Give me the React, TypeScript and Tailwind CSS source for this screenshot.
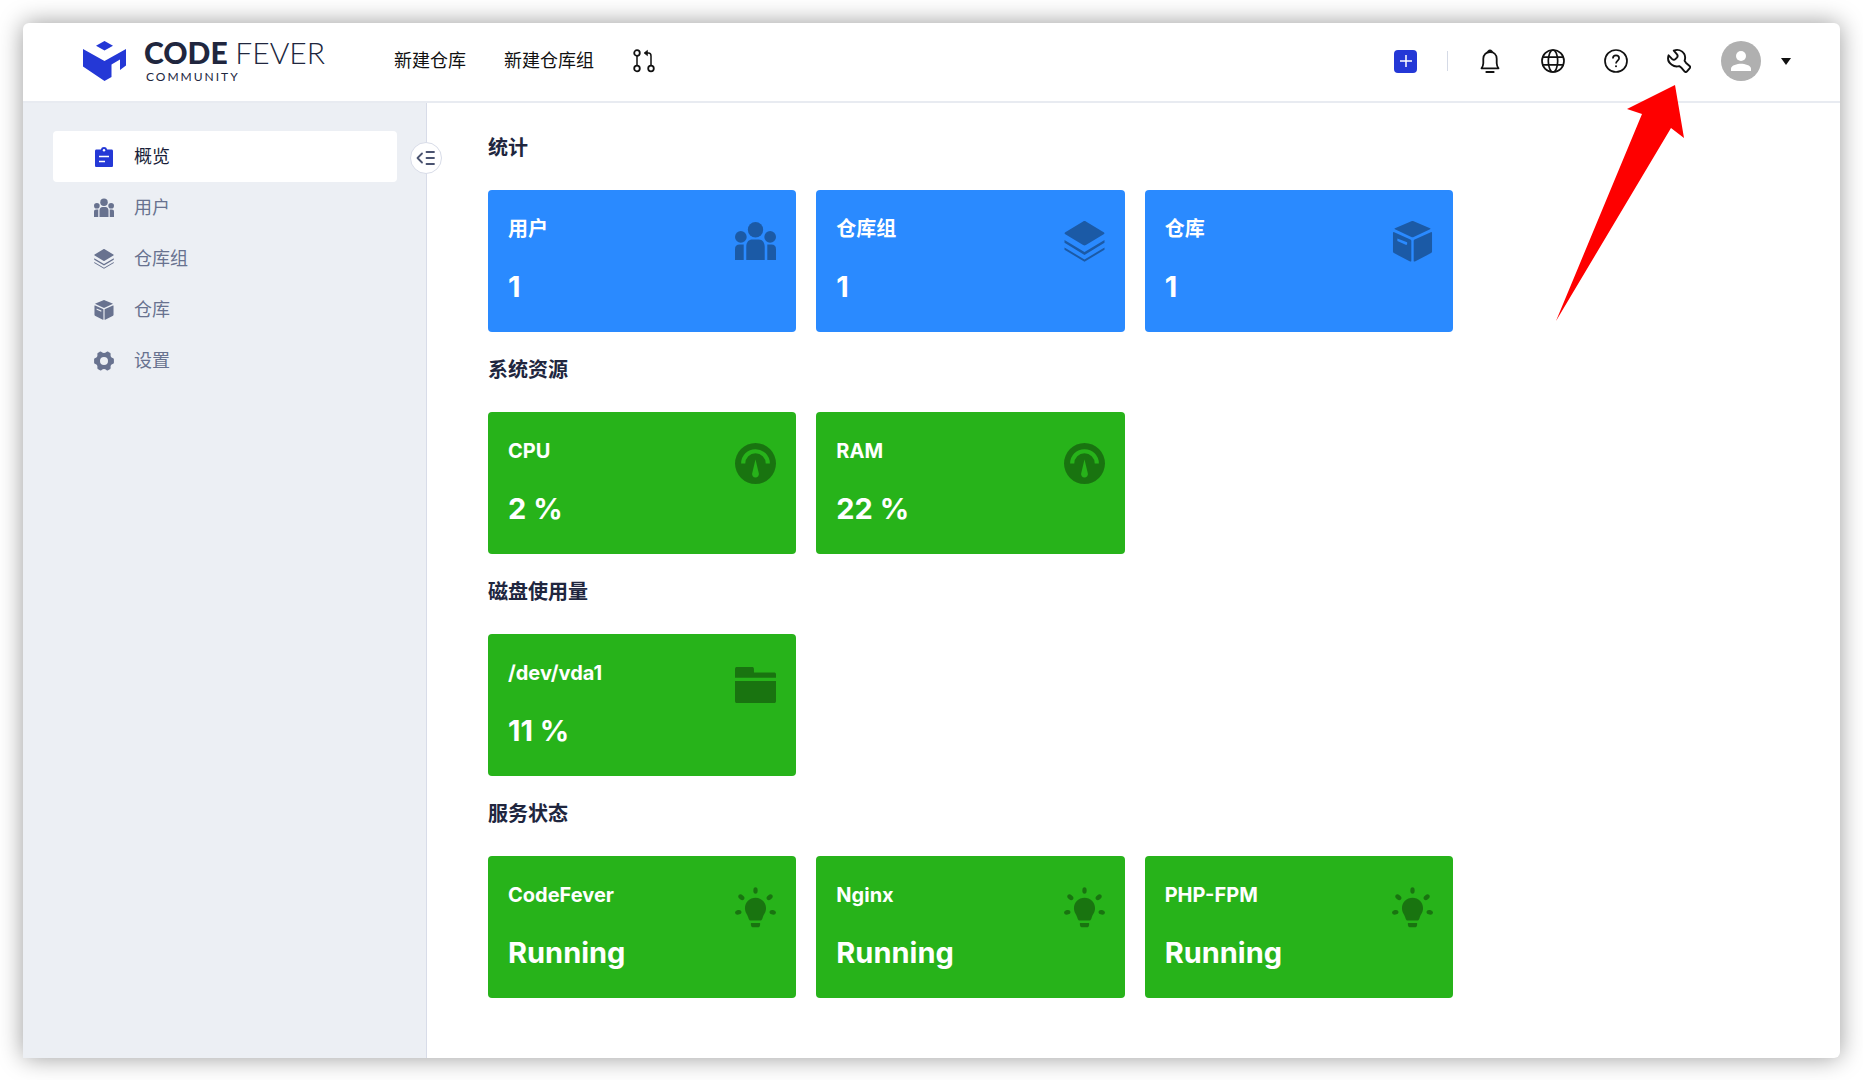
import type { ReactNode } from 'react';

interface IconProps {
  className?: string;
}

interface StatCard {
  label: string;
  value: string;
  icon: (props: IconProps) => ReactNode;
}

interface Section {
  title: string;
  color: string;
  cards: StatCard[];
}

function LogoMark({ className }: IconProps) {
  return (
    <svg viewBox="0 0 43 40" className={className} fill="#2438d6" aria-hidden="true">
      <path d="M21.500 0 30 4.800 21.500 9.600 13 4.800z" />
      <path d="M0 8 21.500 20 43 8v16.500l-6 4.500V18.500L28.500 23.500V36L21.500 40 0 25.500z" />
    </svg>
  );
}

function PullRequestIcon({ className }: IconProps) {
  return (
    <svg viewBox="0 0 24 24" className={className} fill="none" stroke="currentColor" strokeWidth="1.800" aria-hidden="true">
      <circle cx="5" cy="4" r="2.800" />
      <circle cx="5" cy="19.500" r="2.800" />
      <circle cx="19" cy="19.500" r="2.800" />
      <path d="M5 6.800v9.900M19 16.700V7c0-2-1-3-2.500-3H15" strokeWidth="1.500" />
      <path d="M12 4 15.500 1.300v5.400z" fill="currentColor" strokeWidth="0.600" />
    </svg>
  );
}

function BellIcon({ className }: IconProps) {
  return (
    <svg viewBox="0 0 24 24" className={className} fill="none" stroke="currentColor" strokeWidth="1.800" strokeLinejoin="round" strokeLinecap="round" aria-hidden="true">
      <path d="M3.500 19.300h17c-1.400-1.600-1.700-3-1.800-5v-4.500C18.700 5.700 15.800 3 12 3s-6.700 2.700-6.700 6.800v4.500c-.1 2-.4 3.400-1.800 5z" />
      <path d="M8.900 4C9 1.700 10.300.4 12 .4S15 1.700 15.100 4z" fill="currentColor" stroke="none" />
      <path d="M8.300 23h7.400" />
    </svg>
  );
}

function GlobeIcon({ className }: IconProps) {
  return (
    <svg viewBox="0 0 24 24" className={className} fill="none" stroke="currentColor" strokeWidth="1.700" aria-hidden="true">
      <circle cx="12" cy="12" r="11" />
      <ellipse cx="12" cy="12" rx="4.700" ry="11" />
      <path d="M1.800 8.200h20.400M1.800 15.800h20.400" />
    </svg>
  );
}

function HelpIcon({ className }: IconProps) {
  return (
    <svg viewBox="0 0 24 24" className={className} fill="none" stroke="currentColor" strokeWidth="1.700" aria-hidden="true">
      <circle cx="12" cy="12" r="11" />
      <path d="M8.900 9.400c0-1.900 1.300-3 3.100-3s3.100 1.100 3.100 2.800c0 2.300-3.100 2.500-3.100 5.300" />
      <circle cx="12" cy="17.300" r="1" fill="currentColor" stroke="none" />
    </svg>
  );
}

function WrenchIcon({ className }: IconProps) {
  return (
    <svg viewBox="0 0 24 24" className={className} fill="none" stroke="currentColor" strokeWidth="1.900" strokeLinejoin="round" aria-hidden="true">
      <path d="M6.800 1.600c4-1.500 8.300-.2 10.300 3.200 1.300 2.200 1.300 4.600.5 6.900l1.500 2.300 3.500 3c.8.700.8 1.500.2 2.200l-3 3.400c-.7.600-1.400.6-2.100 0l-3-3.500-2.500-2c-2.600.7-5.200.4-7.400-1.300C1.400 13.400.4 9.800 1.600 6.300l3.600 3.800c1 .9 2.300.9 3.200 0l1.500-1.500c.9-1 .9-2.200.1-3.200z" />
    </svg>
  );
}

function UserIcon({ className }: IconProps) {
  return (
    <svg viewBox="0 0 40 40" className={className} aria-hidden="true">
      <circle cx="20" cy="20" r="20" fill="#b0b0b0" />
      <circle cx="20" cy="15" r="5" fill="#fff" />
      <path d="M10 30v-2.500c0-3.300 6.500-4.800 10-4.800s10 1.500 10 4.800V30z" fill="#fff" />
    </svg>
  );
}

function ClipboardIcon({ className }: IconProps) {
  return (
    <svg viewBox="0 0 20 20" className={className} aria-hidden="true">
      <path fill="currentColor" d="M2.500 2.500h4.300a3.300 3.300 0 0 1 6.400 0h4.300c1 0 1.500.6 1.500 1.500v14.500c0 1-.5 1.500-1.500 1.500h-15C1.500 20 1 19.500 1 18.500V4c0-.9.500-1.500 1.500-1.500z" />
      <circle cx="10" cy="3.300" r="1.200" fill="#fff" />
      <path d="M5 9.500h10M5 14.500h6" stroke="#fff" strokeWidth="1.300" />
    </svg>
  );
}

function PeopleIcon({ className }: IconProps) {
  return (
    <svg viewBox="0 0 40 40" className={className} fill="currentColor" aria-hidden="true">
      <circle cx="20" cy="8.500" r="7.500" />
      <circle cx="5.700" cy="15.500" r="5.700" />
      <circle cx="34.300" cy="15.500" r="5.700" />
      <path d="M11 38V25c0-4.500 2.500-7 6-7h6c3.500 0 6 2.500 6 7v13zM0 38V27.500C0 24.500 1.500 23 4.500 23H8.500v15zM40 38V27.500c0-3-1.500-4.500-4.500-4.500H31.500v15z" />
    </svg>
  );
}

function LayersIcon({ className }: IconProps) {
  return (
    <svg viewBox="0 0 40 41" className={className} fill="currentColor" aria-hidden="true">
      <path d="M18.600.4c.9-.5 1.900-.5 2.800 0l17.800 10.800c1 .6 1 1.400 0 2L21.400 24c-.9.500-1.900.5-2.800 0L.8 13.200c-1-.6-1-1.400 0-2z" />
      <path d="M0 19 20 31 40 19v2.800L20 34 0 21.800zM0 26.500 20 38.500 40 26.500v2.300L20 40.700 0 28.800z" />
    </svg>
  );
}

function BoxIcon({ className }: IconProps) {
  return (
    <svg viewBox="0 0 40 42" className={className} fill="currentColor" aria-hidden="true">
      <path d="M18.800.3c.8-.4 1.600-.4 2.400 0L38 7.500c.6.300.6.700 0 1L21.200 16.300c-.8.400-1.600.4-2.400 0L2 8.500c-.6-.3-.6-.7 0-1z" />
      <path d="M21.200 20.500c0-.7.300-1.200 1-1.500L38.700 11.500c.8-.3 1.300 0 1.300.8v18.900c0 .8-.4 1.400-1 1.700L22.500 41.500c-.8.300-1.300 0-1.300-.8z" />
      <path fillRule="evenodd" d="M0 12.300c0-.8.500-1.100 1.300-.8L17.800 19c.7.300 1 .8 1 1.500v20.200c0 .8-.5 1.100-1.300.8L1 32.900c-.6-.3-1-.9-1-1.700zm4.500 5.500v2.600l8.500 4c1 .3 1.500-.2 1.500-1v-1.600z" />
    </svg>
  );
}

function GearIcon({ className }: IconProps) {
  return (
    <svg viewBox="0 0 20 20" className={className} fill="currentColor" aria-hidden="true">
      <path
        fillRule="evenodd"
        d="M5.500.9C6 .3 7 .3 7.600 1c1.500 1.400 3.300 1.400 4.800 0C13 .3 14 .3 14.500.9l1.800 1.200c.4.500.4 1 .3 1.600-.2 1.600.4 2.800 2 3.400.9.300 1.300.8 1.300 1.500v2.800c0 .7-.4 1.200-1.300 1.500-1.600.6-2.200 1.800-2 3.400.1.600.1 1.100-.3 1.600l-1.800 1.200c-.5.600-1.500.6-2.100-.1-1.500-1.400-3.300-1.400-4.800 0-.6.700-1.600.7-2.100.1l-1.800-1.200c-.4-.5-.4-1-.3-1.600.2-1.600-.4-2.800-2-3.400-.9-.3-1.300-.8-1.300-1.500V8.600c0-.7.400-1.200 1.300-1.500 1.600-.6 2.200-1.800 2-3.400-.1-.6-.1-1.100.3-1.600zM10 6a4 4 0 1 0 0 8 4 4 0 0 0 0-8z"
      />
    </svg>
  );
}

function GaugeIcon({ className }: IconProps) {
  return (
    <svg viewBox="0 0 40 40" className={className} fill="currentColor" aria-hidden="true">
      <path
        fillRule="evenodd"
        d="M20 0a20 20 0 1 0 0 40 20 20 0 0 0 0-40zM6 20a14 14 0 0 1 28 0h-4a10 10 0 0 0-20 0zM20 16l3.200 13.500a3.300 3.300 0 1 1-6.400 0z"
      />
    </svg>
  );
}

function FolderIcon({ className }: IconProps) {
  return (
    <svg viewBox="0 0 40 40" className={className} fill="currentColor" aria-hidden="true">
      <path d="M0 12.500V4c0-1.400.6-2 2-2h14.500c1.400 0 2 .6 2 2v3.300H38c1.400 0 2 .6 2 2v3.200zM0 15.500h40V35c0 1.400-.6 2-2 2H2c-1.400 0-2-.6-2-2z" />
    </svg>
  );
}

function BulbIcon({ className }: IconProps) {
  return (
    <svg viewBox="0 0 40 40" className={className} fill="currentColor" aria-hidden="true">
      <path d="M20 10.500c-5.800 0-10.300 4.500-10.300 10 0 4.500 2.300 6 3.300 9.500.5 1.700 1 2.800 2.500 2.800h9c1.500 0 2-1.100 2.500-2.800 1-3.500 3.300-5 3.300-9.500 0-5.500-4.500-10-10.300-10z" />
      <path d="M15.500 35h9v1.500c0 1.800-.9 2.800-2.500 2.800h-4c-1.600 0-2.500-1-2.500-2.800z" />
      <ellipse cx="20" cy="3.500" rx="2.100" ry="3.200" />
      <ellipse cx="6.200" cy="10" rx="2.300" ry="3.300" transform="rotate(-50 6.200 10)" />
      <ellipse cx="33.800" cy="10" rx="2.300" ry="3.300" transform="rotate(50 33.800 10)" />
      <ellipse cx="3.200" cy="24.700" rx="3.200" ry="2.200" transform="rotate(-12 3.200 24.700)" />
      <ellipse cx="36.800" cy="24.700" rx="3.200" ry="2.200" transform="rotate(12 36.800 24.700)" />
    </svg>
  );
}

function CollapseIcon({ className }: IconProps) {
  return (
    <svg viewBox="0 0 20 16" className={className} fill="none" stroke="currentColor" strokeWidth="1.800" strokeLinecap="round" strokeLinejoin="round" aria-hidden="true">
      <path d="M6 3.500 1.500 8 6 12.500M10.500 2H18M10.500 8H18M10.500 14H18" />
    </svg>
  );
}

const NAV_ITEMS = [
  { label: '概览', icon: ClipboardIcon, active: true },
  { label: '用户', icon: PeopleIcon, active: false },
  { label: '仓库组', icon: LayersIcon, active: false },
  { label: '仓库', icon: BoxIcon, active: false },
  { label: '设置', icon: GearIcon, active: false },
];

const TOOLS = [
  { label: '通知', icon: BellIcon },
  { label: '语言', icon: GlobeIcon },
  { label: '帮助', icon: HelpIcon },
  { label: '管理', icon: WrenchIcon },
];

const SECTIONS: Section[] = [
  {
    title: '统计',
    color: 'bg-[#2a8aff]',
    cards: [
      { label: '用户', value: '1', icon: PeopleIcon },
      { label: '仓库组', value: '1', icon: LayersIcon },
      { label: '仓库', value: '1', icon: BoxIcon },
    ],
  },
  {
    title: '系统资源',
    color: 'bg-[#27b31a]',
    cards: [
      { label: 'CPU', value: '2 %', icon: GaugeIcon },
      { label: 'RAM', value: '22 %', icon: GaugeIcon },
    ],
  },
  {
    title: '磁盘使用量',
    color: 'bg-[#27b31a]',
    cards: [{ label: '/dev/vda1', value: '11 %', icon: FolderIcon }],
  },
  {
    title: '服务状态',
    color: 'bg-[#27b31a]',
    cards: [
      { label: 'CodeFever', value: 'Running', icon: BulbIcon },
      { label: 'Nginx', value: 'Running', icon: BulbIcon },
      { label: 'PHP-FPM', value: 'Running', icon: BulbIcon },
    ],
  },
];

function Header() {
  return (
    <header className="flex h-20 shrink-0 items-center border-b-2 border-[#e8ebf1] pr-[49px] pb-0.5 pl-15 text-[#111]">
      <a href="#" className="flex items-center gap-[18px]">
        <LogoMark className="h-10 w-[43px]" />
        <span className="flex flex-col pb-1 font-[Lato,sans-serif] text-[#20263e]">
          <span className="text-[30px] leading-9">
            <span className="font-black">CODE</span> <span className="font-light">FEVER</span>
          </span>
          <span className="pl-0.5 text-xs leading-[14px] tracking-[2px]">COMMUNITY</span>
        </span>
      </a>

      <nav className="ml-[69px] flex items-center gap-[38px] text-lg">
        <a href="#">新建仓库</a>
        <a href="#">新建仓库组</a>
        <a href="#" aria-label="合并请求">
          <PullRequestIcon className="size-6" />
        </a>
      </nav>

      <div className="ml-auto flex items-center">
        <button type="button" aria-label="新建" className="flex size-[23px] items-center justify-center rounded-sm bg-[#2438d6]">
          <svg viewBox="0 0 12 12" className="size-3" stroke="#fff" strokeWidth="1.500" aria-hidden="true">
            <path d="M6 0v12M0 6h12" />
          </svg>
        </button>
        <div className="ml-[30px] h-5 w-px bg-[#d5dae6]" />
        <div className="ml-[30px] flex gap-[39px]">
          {TOOLS.map((tool) => (
            <button key={tool.label} type="button" aria-label={tool.label}>
              <tool.icon className="size-6" />
            </button>
          ))}
        </div>
        <button type="button" aria-label="账户" className="ml-[30px] flex items-center gap-5">
          <UserIcon className="size-10" />
          <svg viewBox="0 0 10 7" className="h-[7px] w-[10px]" fill="currentColor" aria-hidden="true">
            <path d="M0 0h10L5 7z" />
          </svg>
        </button>
      </div>
    </header>
  );
}

function Sidebar() {
  return (
    <aside className="relative w-[404px] shrink-0 border-r border-[#d8dce8] bg-[#eceff4] pt-7 pr-[29px] pl-[30px]">
      <nav className="flex flex-col text-lg">
        {NAV_ITEMS.map((item) => (
          <a
            key={item.label}
            href="#"
            className={`flex h-[51px] items-center gap-5 rounded-[4px] pl-[41px] ${
              item.active ? 'bg-white text-[#1a1f3a]' : 'text-[#68728f]'
            }`}
          >
            <item.icon className={`size-5 ${item.active ? 'text-[#2438d6]' : ''}`} />
            {item.label}
          </a>
        ))}
      </nav>
      <button
        type="button"
        aria-label="收起侧栏"
        className="absolute top-[39px] -right-4 flex size-8 items-center justify-center rounded-full border border-[#d8dce8] bg-white text-[#4a5370]"
      >
        <CollapseIcon className="h-4 w-5" />
      </button>
    </aside>
  );
}

function Card({ card, color }: { card: StatCard; color: string }) {
  return (
    <div className={`flex h-[142px] items-start justify-between rounded-[4px] px-5 pt-[21px] text-white ${color}`}>
      <div className="font-bold">
        <p className="text-xl leading-9">{card.label}</p>
        <p className="mt-5 text-[29px] leading-10">{card.value}</p>
      </div>
      <card.icon className="mt-[10px] size-[41px] text-black/35" />
    </div>
  );
}

export default function App() {
  return (
    <div className="flex min-h-screen overflow-hidden bg-white p-[23px] pb-[22px] font-[Inter,'Noto_Sans_CJK_SC',sans-serif]">
      <div className="relative flex flex-1 flex-col rounded-md bg-white shadow-[0_0_24px_rgba(0,0,0,0.4)]">
        <Header />
        <div className="flex flex-1">
          <Sidebar />
          <main className="flex-1 pt-[31px] pl-[61px]">
            {SECTIONS.map((section) => (
              <section key={section.title} className="mb-6">
                <h2 className="mb-7 text-xl leading-7 font-bold text-[#20263e]">{section.title}</h2>
                <div className="grid max-w-[965px] grid-cols-3 gap-5">
                  {section.cards.map((card) => (
                    <Card key={card.label} card={card} color={section.color} />
                  ))}
                </div>
              </section>
            ))}
          </main>
        </div>
        {/* red arrow pointing at the admin wrench */}
        <svg viewBox="0 0 128 236" className="absolute top-[62px] right-[156px] h-[236px] w-32" fill="#fe0000" aria-hidden="true">
          <path d="M119 0 128 53 115 43 0 236 86 29 71 24z" />
        </svg>
      </div>
    </div>
  );
}
